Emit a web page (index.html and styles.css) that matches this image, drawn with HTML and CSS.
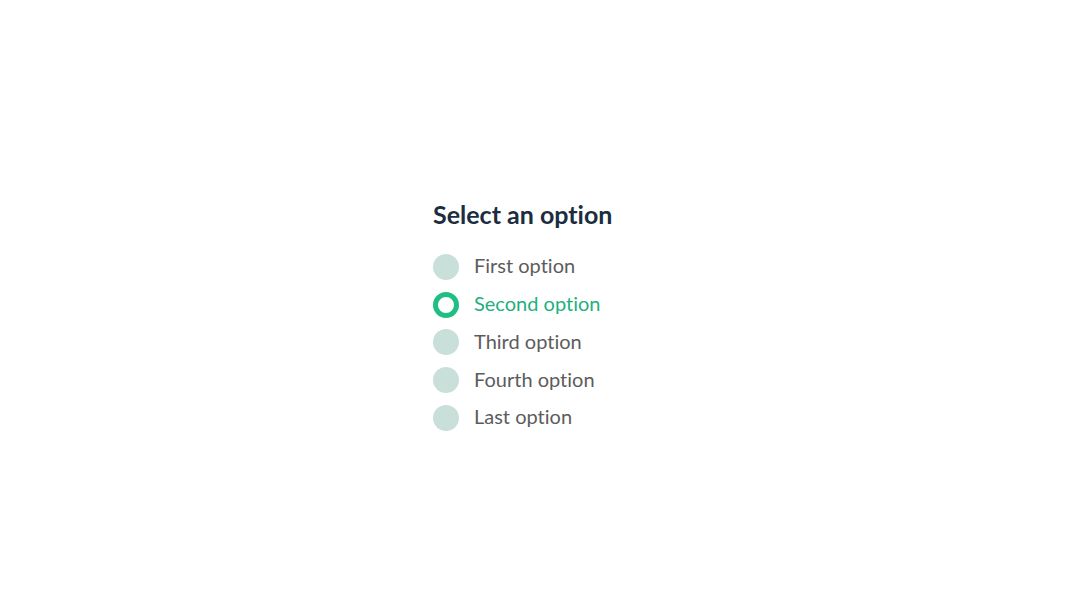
FILE: index.html
```html
<!DOCTYPE html>
<html>
<head>
<meta charset="utf-8">
<link rel="stylesheet" href="styles.css">
</head>
<body>
<div class="wrap">
  <fieldset class="group">
    <h2 class="title">Select an option</h2>
    <label class="opt"><span class="dot"></span><span class="text">First option</span></label>
    <label class="opt sel"><span class="dot"></span><span class="text">Second option</span></label>
    <label class="opt"><span class="dot"></span><span class="text">Third option</span></label>
    <label class="opt"><span class="dot"></span><span class="text">Fourth option</span></label>
    <label class="opt"><span class="dot"></span><span class="text">Last option</span></label>
  </fieldset>
</div>
</body>
</html>
```
FILE: styles.css
```css
html, body { margin: 0; padding: 0; background: #fff; }
body { font-family: Lato, "Noto Sans", sans-serif; font-variant-ligatures: none; }
.wrap { padding: 199px 0 0 433px; }
.group { border: 0; margin: 0; padding: 0; display: flex; flex-direction: column; }
.title { margin: 0 0 18px; font-size: 25px; line-height: 31px; font-weight: 700; color: #1b2d3f; }
.opt { display: flex; align-items: center; gap: 15px; height: 37.75px; }
.dot { width: 26px; height: 26px; border-radius: 50%; background: #c9e0da; box-sizing: border-box; flex: none; }
.text { font-size: 20px; line-height: 24px; padding-bottom: 3px; color: #5c5c5c; }
.sel .dot { background: #fff; border: 5px solid #1fbf84; }
.sel .text { color: #1fb07e; }
```
